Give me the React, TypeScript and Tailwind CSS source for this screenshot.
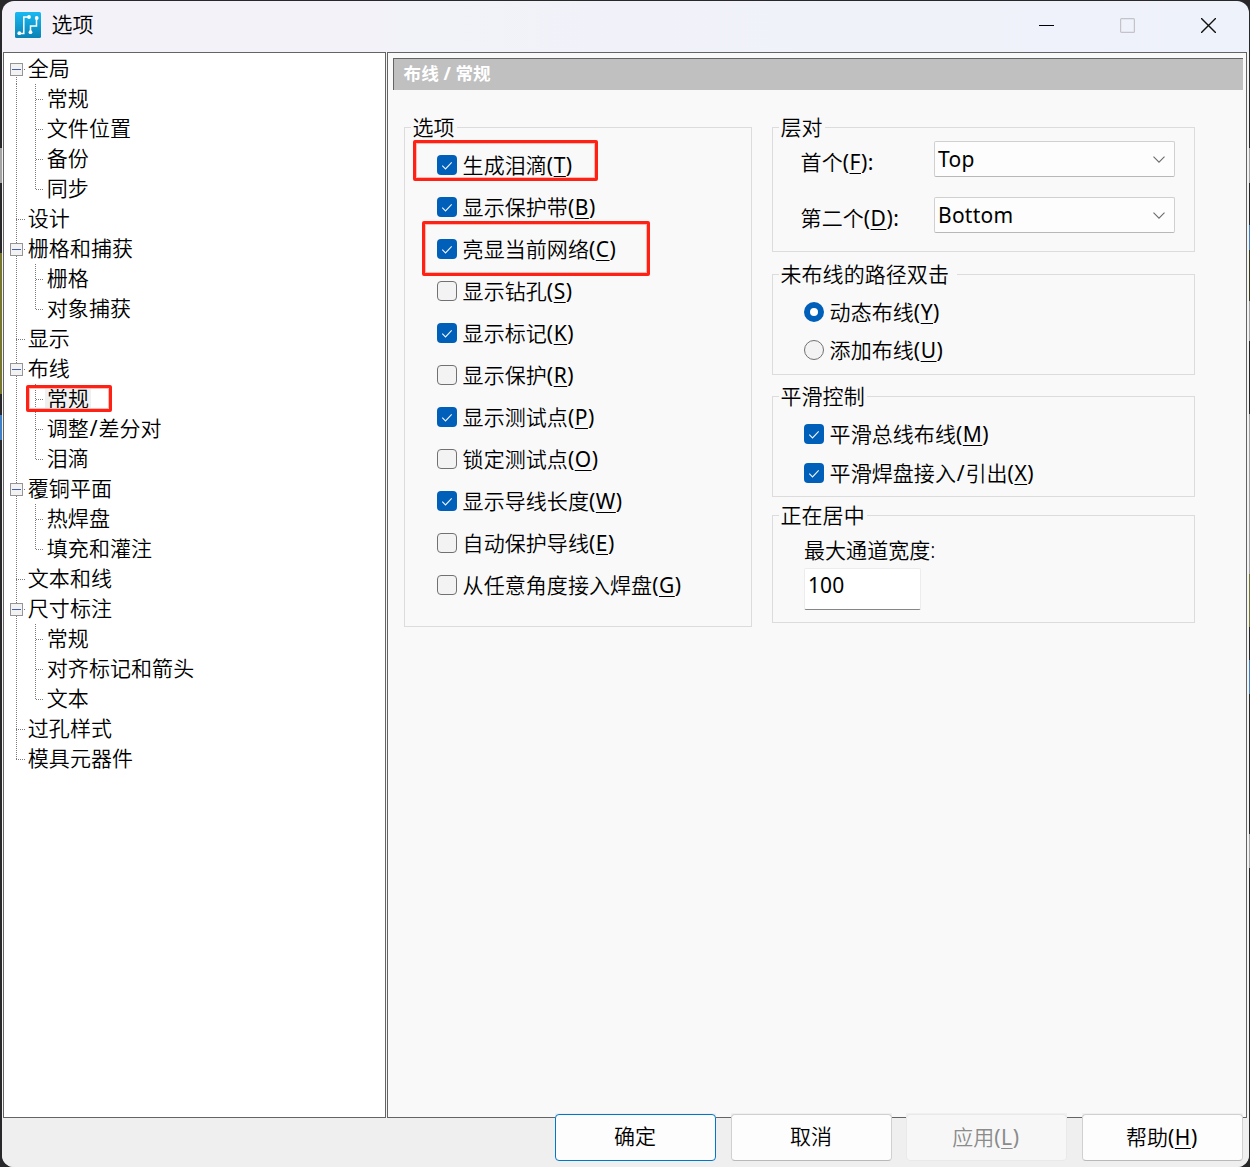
import React from "react";

type Node = { text: string; level: 0 | 1; open?: boolean; last?: boolean; selected?: boolean };

const tree: Node[] = [
  { text: "全局", level: 0, open: true },
  { text: "常规", level: 1 },
  { text: "文件位置", level: 1 },
  { text: "备份", level: 1 },
  { text: "同步", level: 1, last: true },
  { text: "设计", level: 0 },
  { text: "栅格和捕获", level: 0, open: true },
  { text: "栅格", level: 1 },
  { text: "对象捕获", level: 1, last: true },
  { text: "显示", level: 0 },
  { text: "布线", level: 0, open: true },
  { text: "常规", level: 1, selected: true },
  { text: "调整/差分对", level: 1 },
  { text: "泪滴", level: 1, last: true },
  { text: "覆铜平面", level: 0, open: true },
  { text: "热焊盘", level: 1 },
  { text: "填充和灌注", level: 1, last: true },
  { text: "文本和线", level: 0 },
  { text: "尺寸标注", level: 0, open: true },
  { text: "常规", level: 1 },
  { text: "对齐标记和箭头", level: 1 },
  { text: "文本", level: 1, last: true },
  { text: "过孔样式", level: 0 },
  { text: "模具元器件", level: 0, last: true },
];

const options: [string, string, boolean, string?][] = [
  ["生成泪滴", "T", true, "-left-[24px] -top-[15px] h-[41px] w-[185px]"],
  ["显示保护带", "B", true],
  ["亮显当前网络", "C", true, "-left-[15px] -top-[18px] h-[55px] w-[228px]"],
  ["显示钻孔", "S", false],
  ["显示标记", "K", true],
  ["显示保护", "R", false],
  ["显示测试点", "P", true],
  ["锁定测试点", "O", false],
  ["显示导线长度", "W", true],
  ["自动保护导线", "E", false],
  ["从任意角度接入焊盘", "G", false],
];

function Connector({ node, first }: { node: Node; first: boolean }) {
  const w = node.level === 0 ? 24 : 43;
  const endRoot = node.level === 0 && node.last;
  return (
    <svg width={w} height="30" viewBox={`0 0 ${w} 30`} className="shrink-0" shapeRendering="crispEdges">
      <g stroke="#7a7a7a" strokeDasharray="1 1">
        <path d={`M12.5 ${first ? 15 : 0}V${endRoot ? 16 : 30}`} />
        {node.level === 0 ? <path d="M12 15.5H21" /> : <path d={`M31.5 0V${node.last ? 16 : 30}M32 15.5H40`} />}
      </g>
      {node.open && (
        <>
          <rect x="6.5" y="9.5" width="12" height="12" fill="#f3f3f3" stroke="#959595" />
          <path d="M8 15.5H17" stroke="#4560a8" />
        </>
      )}
    </svg>
  );
}

function RedMark({ className }: { className: string }) {
  return <span className={`pointer-events-none absolute z-10 rounded-[2px] border-[3px] border-[#ff2114] shadow-[inset_0_0_0_1px_#ffb9b5] ${className}`} />;
}

function Key({ text, k, tail = "" }: { text: string; k: string; tail?: string }) {
  return (
    <span className="-ml-[0.4px] whitespace-nowrap leading-5">
      {text.split("/").map((part, i) => (
        <React.Fragment key={i}>
          {i > 0 && <span className="px-[0.8px] font-normal">/</span>}
          {part}
        </React.Fragment>
      ))}
      <span className="font-normal tracking-[0.5px]">
        (<span className="underline decoration-1 underline-offset-[3px]">{k}</span>){tail}
      </span>
    </span>
  );
}

function Check({ on }: { on: boolean }) {
  return on ? (
    <svg width="20" height="20" viewBox="0 0 20 20" className="shrink-0">
      <rect width="20" height="20" rx="4" fill="#005fb8" />
      <path d="M5.3 10.7L8.5 13.9L14.7 7.3" fill="none" stroke="#f0f6fc" strokeWidth="1.1" />
    </svg>
  ) : (
    <span className="h-5 w-5 shrink-0 rounded-[4px] border border-[#717171] bg-[#f3f3f3]" />
  );
}

function Group({ title, titleClass, className, children }: { title: string; titleClass: string; className: string; children: React.ReactNode }) {
  return (
    <section className={`relative border border-[#dcdcdc] ${className}`}>
      <h2 className={`absolute -top-[12px] whitespace-nowrap bg-[#f9f9f9] pl-[1.5px] font-[350] leading-[22px] ${titleClass}`}>{title}</h2>
      {children}
    </section>
  );
}

function Combo({ value }: { value: string }) {
  return (
    <div className="flex h-9 w-[241px] items-center justify-between rounded-[2px] border border-[#d0d0d0] border-b-[#b8b8b8] bg-[#fdfdfd] pl-[3px] pr-[9px] font-normal">
      <span className="pt-[2px] tracking-[0.25px]">{value}</span>
      <svg width="12" height="7" viewBox="0 0 12 7" fill="none" stroke="#6b6b6b" strokeWidth="1.1">
        <path d="M0.5 0.7L6 6.2L11.5 0.7" />
      </svg>
    </div>
  );
}

function Button({ children, kind = "normal" }: { children: React.ReactNode; kind?: "primary" | "normal" | "disabled" }) {
  const tone = {
    primary: "border-[#0078c8] bg-[#fdfdfd]",
    normal: "border-[#d0d0d0] border-b-[#b9b9b9] bg-[#fdfdfd]",
    disabled: "border-[#e9e9e9] bg-[#f7f7f7] text-[#8b8b8b]",
  }[kind];
  return (
    <div className="bg-[#f0f0f0] pt-px">
      <button className={`flex h-[47px] w-[161px] items-center justify-center rounded-[4px] border pb-px pr-px ${tone}`}>{children}</button>
    </div>
  );
}

function TitleBar() {
  return (
    <header className="flex h-[51px] items-center pl-[13px] pr-[33px]">
      <svg width="26" height="26" viewBox="0 0 26 26" className="-mt-[3px] shrink-0">
        <defs>
          <linearGradient id="logo" x1="0" y1="0" x2="0" y2="1">
            <stop offset="0" stopColor="#18b9f4" />
            <stop offset="1" stopColor="#0a82b4" />
          </linearGradient>
        </defs>
        <rect width="26" height="26" rx="1.5" fill="url(#logo)" />
        <g fill="none" stroke="#fff" strokeWidth="1.5">
          <path d="M4 21.5H8.8V5H13.5" />
          <path d="M15.5 20V14H21.5V7" />
        </g>
        <g fill="#fff">
          <circle cx="4.3" cy="21.2" r="1.9" />
          <circle cx="14" cy="5" r="1.9" />
          <circle cx="15.5" cy="20.2" r="1.9" />
          <circle cx="21.7" cy="6" r="1.9" />
        </g>
      </svg>
      <h1 className="-mt-[5px] ml-[10.5px] flex-1 font-[350] leading-6">选项</h1>
      <div className="-mt-[3px] flex items-center gap-[66px]">
        <svg width="15" height="15" viewBox="0 0 15 15"><path d="M0 7.5H15" stroke="#000" /></svg>
        <svg width="15" height="15" viewBox="0 0 15 15"><rect x="0.6" y="0.6" width="13.8" height="13.8" rx="1" fill="none" stroke="#c3c3c9" strokeWidth="1.2" /></svg>
        <svg width="15" height="15" viewBox="0 0 15 15"><path d="M0 0L15 15M15 0L0 15" stroke="#111" strokeWidth="1.4" /></svg>
      </div>
    </header>
  );
}

export default function App() {
  return (
    <div className="flex h-[1167px] w-[1250px] overflow-hidden bg-[#28282a] pt-px font-['Noto_Sans','Noto_Sans_CJK_SC',sans-serif] text-[21px] font-[350] tracking-[0.06px] text-black">
      <div className="flex w-[2px] shrink-0 flex-col">
        <i className="mt-[147px] h-[35px] bg-[#a3a3a3]" />
        <i className="mt-[70px] h-[141px] bg-[#77762f]" />
        <i className="mt-[21px] h-[25px] bg-[#3f7fc4]" />
      </div>
      <div className="flex w-[1247px] shrink-0 flex-col rounded-[12px] bg-gradient-to-r from-[#f4f2f8] to-[#eef2fa]">
        <TitleBar />
        <div className="flex h-[1066px] shrink-0 gap-px bg-[#f4f4f4] pl-px">
          <nav className="w-[383px] shrink-0 border border-[#646464] bg-white pt-px">
            {tree.map((n, i) => (
              <div key={i} className="relative flex h-[30px] items-center">
                <Connector node={n} first={i === 0} />
                <span className={`-mt-[2px] whitespace-nowrap leading-[27px] ${n.selected ? "-ml-[2px] bg-[#f0f0f0] px-[2px]" : "-ml-[0.2px]"}`}>
                  {n.text.split("/").map((part, j) => (
                    <React.Fragment key={j}>
                      {j > 0 && <span className="px-[0.8px] font-normal">/</span>}
                      {part}
                    </React.Fragment>
                  ))}
                </span>
                {n.selected && <RedMark className="left-[22px] top-px h-[27px] w-[86px]" />}
              </div>
            ))}
          </nav>
          <main className="w-[860px] shrink-0 border border-[#646464] bg-[#f9f9f9] pl-[5px] pt-[5px]">
            <div className="flex h-8 w-[850px] items-center border-l border-t border-[#646464] bg-[#c0c0c0] pb-[2px] pl-[9.5px] text-[17.6px] font-bold text-white">
              布线 / 常规
            </div>
            <div className="flex gap-[20px] pl-[11px] pt-[37px]">
              <Group title="选项" titleClass="left-[6px] w-[46px]" className="h-[500px] w-[348px] pl-[32px] pt-[27px]">
                <div className="flex flex-col gap-[22px]">
                  {options.map(([t, k, on, mark]) => (
                    <div key={k} className="relative flex h-5 items-center gap-[6px]">
                      <Check on={on} />
                      <Key text={t} k={k} />
                      {mark && <RedMark className={mark} />}
                    </div>
                  ))}
                </div>
              </Group>
              <div className="w-[423px]">
                <Group title="层对" titleClass="left-[6px] w-[46px]" className="h-[125px] pl-[28px] pt-[13px]">
                  <div className="flex flex-col gap-[20px]">
                    <div className="flex h-9"><span className="w-[133px] pt-[6px] leading-[30px]"><Key text="首个" k="F" tail=":" /></span><Combo value="Top" /></div>
                    <div className="flex h-9"><span className="w-[133px] pt-[6px] leading-[30px]"><Key text="第二个" k="D" tail=":" /></span><Combo value="Bottom" /></div>
                  </div>
                </Group>
                <Group title="未布线的路径双击" titleClass="left-[6px] w-[178px]" className="mt-[22px] h-[101px] pl-[31px] pt-[27px]">
                  <div className="flex h-5 items-center gap-[6px]">
                    <span className="h-5 w-5 rounded-full border-[6px] border-[#005fb8] bg-white" />
                    <Key text="动态布线" k="Y" />
                  </div>
                  <div className="mt-[18px] flex h-5 items-center gap-[6px]">
                    <span className="h-5 w-5 rounded-full border border-[#717171] bg-[#f3f3f3]" />
                    <Key text="添加布线" k="U" />
                  </div>
                </Group>
                <Group title="平滑控制" titleClass="left-[6px] w-[88px]" className="mt-[21px] h-[101px] pl-[31px] pt-[27px]">
                  <div className="flex h-5 items-center gap-[6px]"><Check on /><Key text="平滑总线布线" k="M" /></div>
                  <div className="mt-[19px] flex h-5 items-center gap-[6px]"><Check on /><Key text="平滑焊盘接入/引出" k="X" /></div>
                </Group>
                <Group title="正在居中" titleClass="left-[6px] w-[88px]" className="mt-[18px] h-[108px] pl-[31px] pt-[22px]">
                  <p className="leading-6">最大通道宽度:</p>
                  <div className="mt-[6px] h-[42px] w-[117px] rounded-[2px] border border-[#ececec] border-b-[#868686] bg-white pl-[3px] pt-[3px] font-normal leading-[26px]">100</div>
                </Group>
              </div>
            </div>
          </main>
        </div>
        <footer className="flex h-[49px] justify-end rounded-b-[12px] bg-[#efefef] pr-[6px]">
          <div className="relative -mt-[5px] flex gap-[15px] self-start">
            <Button kind="primary">确定</Button>
            <div className="-mr-px"><Button>取消</Button></div>
            <Button kind="disabled"><Key text="应用" k="L" /></Button>
            <Button><Key text="帮助" k="H" /></Button>
          </div>
        </footer>
      </div>
      <div className="flex w-px shrink-0 flex-col">
        <i className="mt-[147px] h-[35px] bg-[#a3a3a3]" />
        <i className="mt-[42px] h-[25px] bg-[#3f7fc4]" />
        <i className="h-[51px] bg-[#3a3a1c]" />
        <i className="h-[40px] bg-[#a3a3a3]" />
        <i className="mt-[73px] h-[160px] bg-[#a3a3a3]" />
        <i className="h-[53px] bg-[#77762f]" />
        <i className="mt-[33px] h-[34px] bg-[#3f7fc4]" />
        <i className="mt-[140px] h-[34px] bg-[#a3a3a3]" />
      </div>
    </div>
  );
}
